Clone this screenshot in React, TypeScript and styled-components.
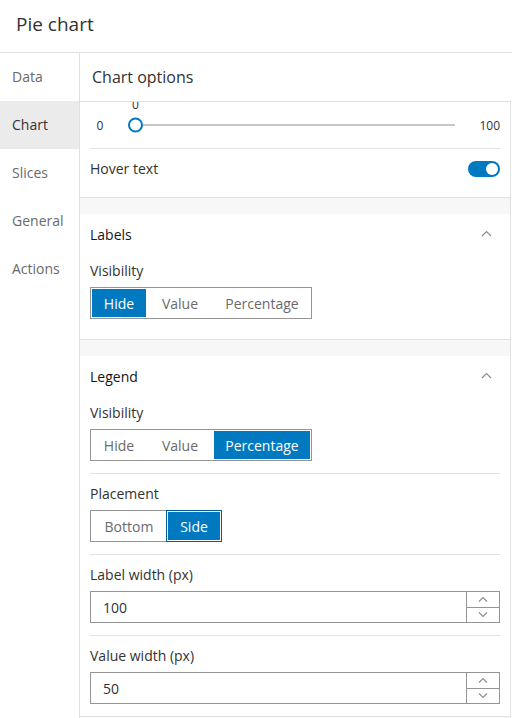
import React from 'react';
import styled, { createGlobalStyle } from 'styled-components';

const GlobalStyle = createGlobalStyle`
  html, body {
    margin: 0;
    padding: 0;
    background: #ffffff;
  }
  body {
    font-family: 'Open Sans', 'Liberation Sans', sans-serif;
    color: #323232;
  }
  * {
    box-sizing: border-box;
  }
`;

const navItems = ['Data', 'Chart', 'Slices', 'General', 'Actions'];

interface SegOption {
  label: string;
  width: number;
}

const visibilityOptions: SegOption[] = [
  { label: 'Hide', width: 54 },
  { label: 'Value', width: 68 },
  { label: 'Percentage', width: 96 },
];

const placementOptions: SegOption[] = [
  { label: 'Bottom', width: 74 },
  { label: 'Side', width: 56 },
];

const Chevron: React.FC<{ up?: boolean; size?: number }> = ({ up, size = 9 }) => (
  <svg width={size + 2} height={size / 2 + 3} viewBox={`0 0 ${size + 2} ${size / 2 + 3}`}>
    <polyline
      points={
        up
          ? `1,${size / 2 + 1.5} ${size / 2 + 1},1.5 ${size + 1},${size / 2 + 1.5}`
          : `1,1.5 ${size / 2 + 1},${size / 2 + 1.5} ${size + 1},1.5`
      }
      fill="none"
      stroke="#8a8a8a"
      strokeWidth="1.1"
    />
  </svg>
);

const Segmented: React.FC<{ options: SegOption[]; selected: string; focused?: boolean }> = ({
  options,
  selected,
  focused,
}) => (
  <StyledSegmented>
    {options.map((o) => (
      <StyledSegButton
        key={o.label}
        $active={o.label === selected}
        $focused={focused && o.label === selected}
        style={{ width: o.width }}
      >
        {o.label}
      </StyledSegButton>
    ))}
  </StyledSegmented>
);

const NumberField: React.FC<{ value: string }> = ({ value }) => (
  <StyledNumberBox>
    <StyledNumberText>{value}</StyledNumberText>
    <StyledSpinner>
      <StyledSpinButton>
        <Chevron up size={8} />
      </StyledSpinButton>
      <StyledSpinButton $bottom>
        <Chevron size={8} />
      </StyledSpinButton>
    </StyledSpinner>
  </StyledNumberBox>
);

const App: React.FC = () => {
  return (
    <>
      <GlobalStyle />
      <StyledPage>
        <StyledTopBar>Pie chart</StyledTopBar>
        <StyledBody>
          <StyledNav>
            {navItems.map((item) => (
              <StyledNavItem key={item} $active={item === 'Chart'}>
                {item}
              </StyledNavItem>
            ))}
          </StyledNav>
          <StyledMain>
            <StyledPanelTitle>Chart options</StyledPanelTitle>
            <StyledScroll>
              <StyledSection $pb={0}>
                <StyledSliderRow>
                  <StyledMinLabel>0</StyledMinLabel>
                  <StyledTrack>
                    <StyledThumb>
                      <StyledBubble>0</StyledBubble>
                    </StyledThumb>
                  </StyledTrack>
                  <StyledMaxLabel>100</StyledMaxLabel>
                </StyledSliderRow>
                <StyledToggleRow>
                  <span>Hover text</span>
                  <StyledToggle $on>
                    <StyledKnob />
                  </StyledToggle>
                </StyledToggleRow>
              </StyledSection>

              <StyledSection $pb={8}>
                <StyledSectionHeader>
                  <span>Labels</span>
                  <Chevron up />
                </StyledSectionHeader>
                <StyledField>
                  <StyledFieldLabel>Visibility</StyledFieldLabel>
                  <Segmented options={visibilityOptions} selected="Hide" />
                </StyledField>
              </StyledSection>

              <StyledSection $pb={0}>
                <StyledSectionHeader>
                  <span>Legend</span>
                  <Chevron up />
                </StyledSectionHeader>
                <StyledField>
                  <StyledFieldLabel>Visibility</StyledFieldLabel>
                  <Segmented options={visibilityOptions} selected="Percentage" />
                </StyledField>
                <StyledField>
                  <StyledFieldLabel>Placement</StyledFieldLabel>
                  <Segmented options={placementOptions} selected="Side" focused />
                </StyledField>
                <StyledField>
                  <StyledFieldLabel>Label width (px)</StyledFieldLabel>
                  <NumberField value="100" />
                </StyledField>
                <StyledField>
                  <StyledFieldLabel>Value width (px)</StyledFieldLabel>
                  <NumberField value="50" />
                </StyledField>
              </StyledSection>
            </StyledScroll>
          </StyledMain>
        </StyledBody>
      </StyledPage>
    </>
  );
};

export default App;

const StyledPage = styled.div`
  width: 512px;
  height: 718px;
  display: flex;
  flex-direction: column;
  overflow: hidden;
  background: #ffffff;
`;

const StyledTopBar = styled.div`
  height: 53px;
  flex-shrink: 0;
  display: flex;
  align-items: center;
  padding: 0 0 4px 16px;
  border-bottom: 1px solid #e0e0e0;
  font-size: 19px;
  color: #323232;
`;

const StyledBody = styled.div`
  flex: 1;
  display: flex;
  min-height: 0;
`;

const StyledNav = styled.nav`
  width: 80px;
  flex-shrink: 0;
  border-right: 1px solid #e0e0e0;
  display: flex;
  flex-direction: column;
`;

const StyledNavItem = styled.div<{ $active?: boolean }>`
  height: 48px;
  display: flex;
  align-items: center;
  padding: 0 0 1px 12px;
  font-size: 14px;
  color: ${(p) => (p.$active ? '#323232' : '#6a6a6a')};
  background: ${(p) => (p.$active ? '#ebebeb' : 'transparent')};
`;

const StyledMain = styled.div`
  flex: 1;
  min-width: 0;
  display: flex;
  flex-direction: column;
  padding-right: 1px;
`;

const StyledPanelTitle = styled.div`
  height: 49px;
  flex-shrink: 0;
  display: flex;
  align-items: center;
  padding-left: 12px;
  border-bottom: 1px solid #e0e0e0;
  font-size: 16px;
  color: #323232;
`;

const StyledScroll = styled.div`
  flex: 1;
  overflow: hidden;
  background: #f7f7f7;
  border-right: 1px solid #e2e2e2;
`;

const StyledSection = styled.section<{ $pb: number }>`
  background: #ffffff;
  padding: 0 10px ${(p) => p.$pb}px;
  border-bottom: 1px solid #e2e2e2;
  margin-bottom: 16px;
`;

const StyledSliderRow = styled.div`
  height: 47px;
  display: flex;
  align-items: center;
  border-bottom: 1px solid #e2e2e2;
  font-size: 12px;
  color: #323232;
`;

const StyledMinLabel = styled.span`
  width: 20px;
  text-align: center;
`;

const StyledMaxLabel = styled.span`
  width: 45px;
  text-align: right;
`;

const StyledTrack = styled.div`
  position: relative;
  flex: 1;
  height: 2px;
  margin-left: 18px;
  background: #c8c8c8;
`;

const StyledThumb = styled.div`
  position: absolute;
  left: 0;
  top: 50%;
  width: 15px;
  height: 15px;
  transform: translateY(-50%);
  border: 2px solid #0079c1;
  border-radius: 50%;
  background: #ffffff;
`;

const StyledBubble = styled.span`
  position: absolute;
  left: 50%;
  bottom: calc(100% + 8px);
  transform: translateX(-50%);
  font-size: 12px;
  line-height: 14px;
  color: #323232;
`;

const StyledToggleRow = styled.div`
  display: flex;
  align-items: center;
  justify-content: space-between;
  padding: 12px 0 20px;
  font-size: 14px;
  line-height: 16px;
  color: #323232;
`;

const StyledToggle = styled.div<{ $on?: boolean }>`
  position: relative;
  width: 32px;
  height: 16px;
  border-radius: 8px;
  background: ${(p) => (p.$on ? '#0079c1' : '#c8c8c8')};
  display: flex;
  align-items: center;
  justify-content: ${(p) => (p.$on ? 'flex-end' : 'flex-start')};
  padding: 0 2px;
`;

const StyledKnob = styled.span`
  width: 12px;
  height: 12px;
  border-radius: 50%;
  background: #ffffff;
`;

const StyledSectionHeader = styled.div`
  height: 37px;
  display: flex;
  align-items: center;
  justify-content: space-between;
  padding: 3px 8px 0 0;
  font-size: 14px;
  font-weight: 500;
  color: #151515;
`;

const StyledField = styled.div`
  padding: 10px 0 12px;
  border-bottom: 1px solid #e2e2e2;

  &:last-child {
    border-bottom: none;
  }
`;

const StyledFieldLabel = styled.div`
  font-size: 14px;
  line-height: 20px;
  margin-bottom: 6px;
  color: #323232;
`;

const StyledSegmented = styled.div`
  display: inline-flex;
  height: 32px;
  padding: 1px;
  border: 1px solid #959595;
`;

const StyledSegButton = styled.div<{ $active?: boolean; $focused?: boolean }>`
  display: flex;
  align-items: center;
  justify-content: center;
  font-size: 14px;
  color: ${(p) => (p.$active ? '#ffffff' : '#6a6a6a')};
  background: ${(p) => (p.$active ? '#0079c1' : 'transparent')};
  ${(p) =>
    p.$focused &&
    `
    margin: -2px -2px -2px 0;
    border: 1px solid #005e95;
    box-shadow: inset 0 0 0 1px #ffffff;
  `}
`;

const StyledNumberBox = styled.div`
  display: flex;
  height: 32px;
  border: 1px solid #959595;
`;

const StyledNumberText = styled.div`
  flex: 1;
  display: flex;
  align-items: center;
  padding-left: 12px;
  font-size: 14px;
  color: #323232;
`;

const StyledSpinner = styled.div`
  width: 33px;
  display: flex;
  flex-direction: column;
  border-left: 1px solid #959595;
`;

const StyledSpinButton = styled.div<{ $bottom?: boolean }>`
  flex: 1;
  display: flex;
  align-items: center;
  justify-content: center;
  border-top: ${(p) => (p.$bottom ? '1px solid #959595' : 'none')};
`;
